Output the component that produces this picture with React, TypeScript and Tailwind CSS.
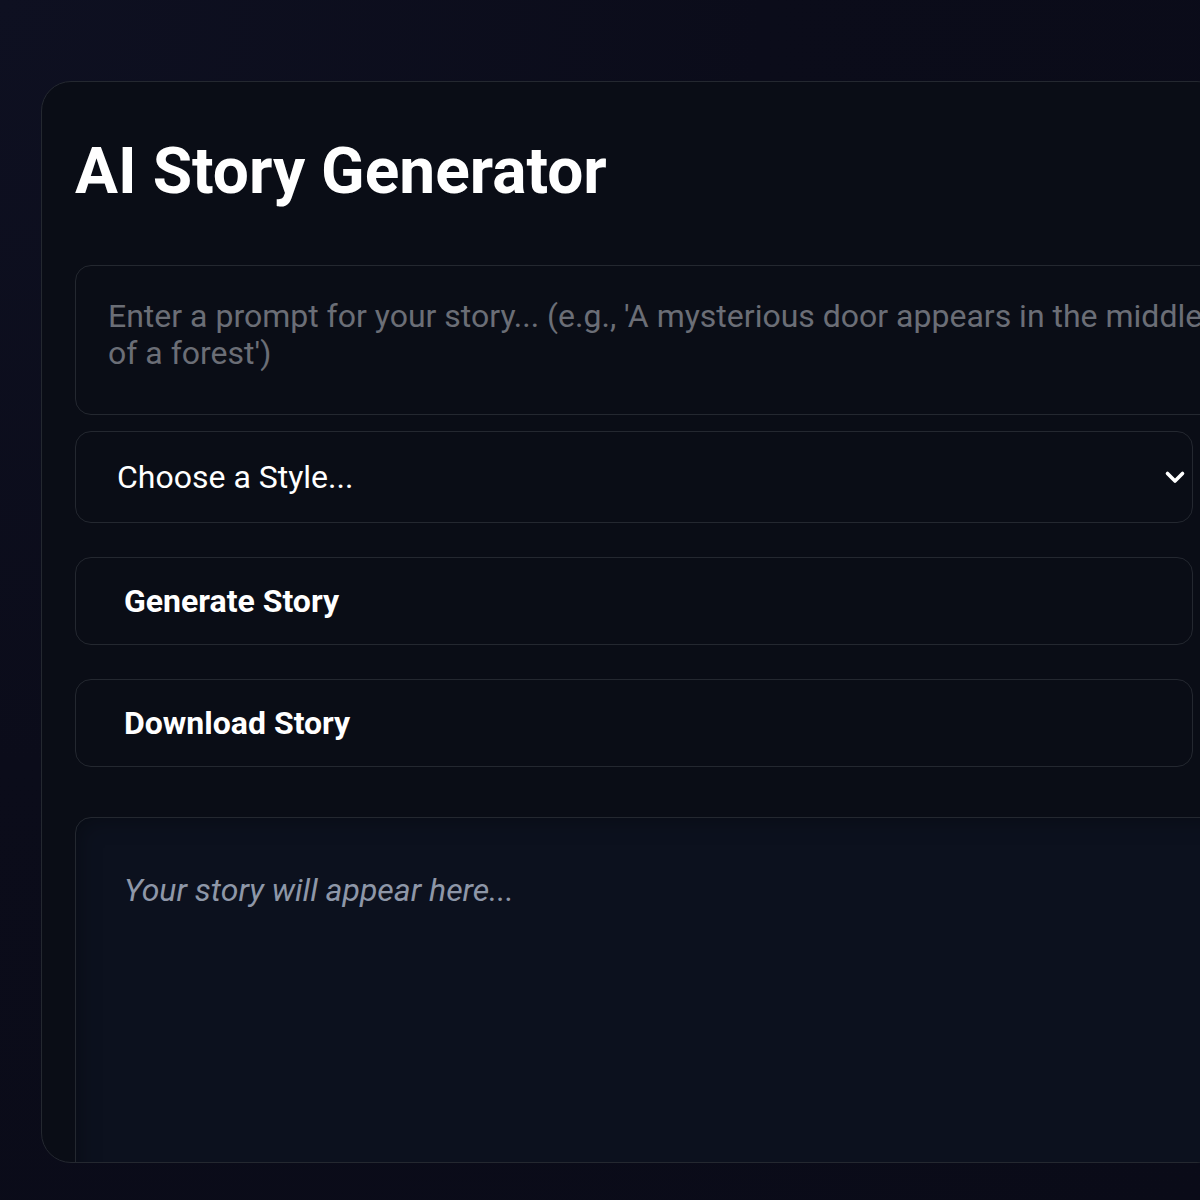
import { useState } from 'react';

const STYLES = ['Fantasy', 'Sci-Fi', 'Mystery', 'Horror', 'Romance'];

export default function App() {
  const [prompt, setPrompt] = useState('');
  const [style, setStyle] = useState('');

  return (
    <div className="w-full h-[1200px] overflow-hidden bg-[#0b0c1a] bg-[radial-gradient(ellipse_at_top_left,#0e1021_0%,#0b0c1a_45%,#0a0b18_100%)] pt-[81px] pl-[41px] font-['Roboto',sans-serif]">
      <div className="w-[1186px] h-[1082px] overflow-hidden rounded-[30px] border border-[#242830] bg-[#0a0d16] p-[33px] flex flex-col">
        <h1 className="mt-[19px] mb-[54px] text-[64px] leading-[1.2] font-bold text-white">
          AI Story Generator
        </h1>

        <textarea
          value={prompt}
          onChange={(e) => setPrompt(e.target.value)}
          placeholder="Enter a prompt for your story... (e.g., 'A mysterious door appears in the middle of a forest')"
          className="w-[1184px] h-[150px] shrink-0 resize-none rounded-2xl border border-[#242830] bg-[#0a0d16] p-8 text-[32px] leading-[1.172] text-white placeholder:text-[#6b6e76] focus:outline-none"
        />

        <div className="relative mt-4 w-[1118px] shrink-0">
          <select
            value={style}
            onChange={(e) => setStyle(e.target.value)}
            className="w-full h-[92px] appearance-none rounded-2xl border border-[#242830] bg-[#0a0d16] pl-[41px] pr-16 text-[32px] leading-normal text-white focus:outline-none"
          >
            <option value="">Choose a Style...</option>
            {STYLES.map((s) => (
              <option key={s} value={s}>
                {s}
              </option>
            ))}
          </select>
          <svg
            className="pointer-events-none absolute right-[7px] top-1/2 -translate-y-1/2 w-[22px] h-[16px]"
            viewBox="0 0 22 16"
            fill="none"
          >
            <path d="M3.5 4.5l7.5 7.5 7.5-7.5" stroke="white" strokeWidth="3.6" strokeLinecap="round" strokeLinejoin="round" />
          </svg>
        </div>

        <button className="mt-[34px] w-[1118px] h-[88px] shrink-0 rounded-2xl border border-[#242830] bg-[#0a0d16] px-12 text-left text-[32px] leading-normal font-bold text-white">
          Generate Story
        </button>

        <button className="mt-[34px] w-[1118px] h-[88px] shrink-0 rounded-2xl border border-[#242830] bg-[#0a0d16] px-12 text-left text-[32px] leading-normal font-bold text-white">
          Download Story
        </button>

        <div className="mt-[50px] w-[1184px] h-[500px] shrink-0 rounded-2xl border border-[#242830] bg-[#0c111e] shadow-[inset_0_0_24px_rgba(0,0,0,0.35)] px-12 pt-12">
          <p className="text-[32px] leading-[1.5] italic text-[#8e97a8]">Your story will appear here...</p>
        </div>
      </div>
    </div>
  );
}
